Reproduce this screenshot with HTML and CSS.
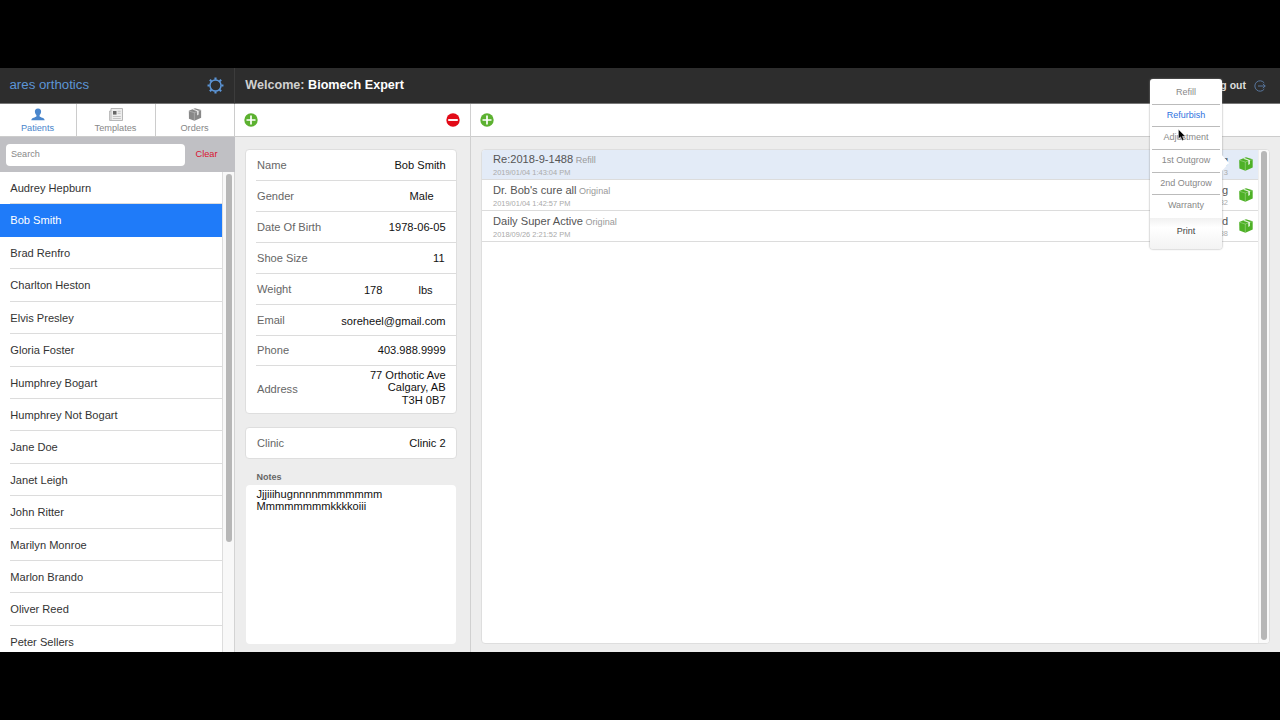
FILE: index.html
```html
<!DOCTYPE html>
<html lang="en">
<head>
<meta charset="utf-8">
<title>ares orthotics</title>
<link rel="stylesheet" href="styles.css">
</head>
<body>
<svg class="defs" width="0" height="0">
  <symbol id="box" viewBox="0 0 14 14">
    <path d="M.2 3 7 .3l6.700 1.900v8.300L6.400 13.700.4 11.500z" fill="currentColor"/>
    <path d="M.6 3.300 6.300 5M6.300 5v8.400M6.300 5 13.500 2.500" fill="none" stroke="#fff" stroke-width=".5" opacity=".6"/>
    <path d="M4.100 1.700 9.300 3.500v4.500l1.600-1V3L5.700 1.100z" fill="#fff" opacity=".85"/>
  </symbol>
  <symbol id="plus" viewBox="0 0 14 14">
    <circle cx="7" cy="7" r="6.7" fill="#5cb130"/>
    <path d="M7 2.500v9M2.500 7h9" stroke="#fff" stroke-width="1.700"/>
  </symbol>
</svg>
<div class="app">
  <aside class="sidebar">
    <header class="topbar brand"><span>ares orthotics</span>
      <svg class="gear" viewBox="-8 -8 16 16"><circle r="5.200" fill="none" stroke="#5c95d6" stroke-width="1.400"/><path d="M0-5.500v-2M0 5.500v2M-5.500 0h-2M5.500 0h2M3.900-3.900 5.300-5.300M-3.900-3.900-5.300-5.300M3.900 3.900 5.300 5.300M-3.900 3.900-5.300 5.300" stroke="#5c95d6" stroke-width="2"/></svg>
    </header>
    <nav class="tabs">
      <div class="tab active"><svg viewBox="0 0 14 12"><path d="M7 0C4.700 0 3.800 1.400 3.900 3.300c.1 1.500.8 2.600 1.500 3.200v1.500C4.500 9 .8 8.900.3 11.800h13.400C13.200 8.900 9.500 9 8.600 8V6.500c.7-.6 1.400-1.700 1.500-3.200C10.200 1.400 9.300 0 7 0z" fill="currentColor"/></svg>Patients</div>
      <div class="tab"><svg viewBox="0 0 14 13"><path d="M2 .5h11.500v12H.6V3H2z" fill="#ededed" stroke="#b0b0b0" stroke-width=".9"/><path d="M2 3v9" stroke="#b0b0b0" stroke-width=".8"/><path d="M4 3h3.500v3.600H4z" fill="#666"/><path d="M8.700 3.300h3M8.700 5.300h3M3.800 8.500h8M3.800 10.500h8" stroke="#b8b8b8" stroke-width=".8"/></svg>Templates</div>
      <div class="tab"><svg viewBox="0 0 14 14"><use href="#box"/></svg>Orders</div>
    </nav>
    <div class="search"><div class="field">Search</div><span class="clear">Clear</span></div>
    <div class="patients">
      <ul class="list">
        <li>Audrey Hepburn</li><li class="selected">Bob Smith</li><li>Brad Renfro</li><li>Charlton Heston</li><li>Elvis Presley</li><li>Gloria Foster</li><li>Humphrey Bogart</li><li>Humphrey Not Bogart</li><li>Jane Doe</li><li>Janet Leigh</li><li>John Ritter</li><li>Marilyn Monroe</li><li>Marlon Brando</li><li>Oliver Reed</li><li>Peter Sellers</li>
      </ul>
      <div class="track"><div class="thumb"></div></div>
    </div>
  </aside>
  <section class="main">
    <header class="topbar welcome"><span><i>Welcome:</i> Biomech Expert</span>
      <span class="logout">g out <svg viewBox="0 0 12 12"><path d="M10.300 3A5.200 5.200 0 1 0 10.300 9M4 6h7.300M8.800 3.800 11.200 6 8.800 8.200" fill="none" stroke="#58779f" stroke-width="1"/></svg></span>
    </header>
    <div class="columns">
      <div class="detail">
        <div class="toolbar"><svg viewBox="0 0 14 14"><use href="#plus"/></svg><svg viewBox="0 0 14 14"><circle cx="7" cy="7" r="6.700" fill="#e20a17"/><path d="M2.200 7h9.600" stroke="#fff" stroke-width="1.900"/></svg></div>
        <div class="card info">
          <div class="row"><label>Name</label><span>Bob Smith</span></div>
          <div class="row"><label>Gender</label><span class="pick">Male</span></div>
          <div class="row"><label>Date Of Birth</label><span>1978-06-05</span></div>
          <div class="row low"><label>Shoe Size</label><span>11</span></div>
          <div class="row lower"><label>Weight</label><span class="amount">178</span><span class="unit">lbs</span></div>
          <div class="row lower"><label>Email</label><span>soreheel@gmail.com</span></div>
          <div class="row phone"><label>Phone</label><span>403.988.9999</span></div>
          <div class="row address"><label>Address</label><span>77 Orthotic Ave<br>Calgary, AB<br>T3H 0B7</span></div>
        </div>
        <div class="card clinic"><div class="row"><label>Clinic</label><span>Clinic 2</span></div></div>
        <h2>Notes</h2>
        <div class="notes">Jjjiiihugnnnnmmmmmmm<br>Mmmmmmmmkkkkoiii</div>
      </div>
      <div class="orders">
        <div class="toolbar"><svg viewBox="0 0 14 14"><use href="#plus"/></svg></div>
        <div class="card orderbox">
          <div class="orderlist">
            <div class="order current"><div class="what"><b>Re:2018-9-1488</b> Refill<small>2019/01/04 1:43:04 PM</small></div><div class="state">g<small>3</small></div><svg viewBox="0 0 14 14"><use href="#box"/></svg></div>
            <div class="order"><div class="what"><b>Dr. Bob's cure all</b> Original<small>2019/01/04 1:42:57 PM</small></div><div class="state">g<small>32</small></div><svg viewBox="0 0 14 14"><use href="#box"/></svg></div>
            <div class="order"><div class="what"><b>Daily Super Active</b> Original<small>2018/09/26 2:21:52 PM</small></div><div class="state">d<small>38</small></div><svg viewBox="0 0 14 14"><use href="#box"/></svg></div>
          </div>
          <div class="track"><div class="thumb"></div></div>
        </div>
      </div>
    </div>
  </section>
  <div class="menu">
    <div>Refill</div><div class="hot">Refurbish</div><div>Adjustment</div><div>1st Outgrow</div><div>2nd Outgrow</div><div class="last">Warranty</div><div class="print">Print</div>
    <svg class="arrow" viewBox="0 0 8 18"><path d="M0 0 8 9 0 18z" fill="#fff"/></svg>
  </div>
  <svg class="cursor" viewBox="0 0 8 12"><path d="M.5.5v9.300l2.100-2 1.500 3.600 1.700-.7-1.500-3.500h2.900z" fill="#000" stroke="#ddd" stroke-width=".4"/></svg>
</div>
</body>
</html>
```

FILE: styles.css
```css
* { box-sizing: border-box; }
body { margin: 0; height: 720px; padding: 68px 0; background: #000; font: 11.1px/13px "Liberation Sans", Arial, sans-serif; color: #333; overflow: hidden; }
svg { display: block; flex: none; }
.defs { position: absolute; }
.app { position: relative; display: flex; height: 584px; background: #ededed; }
.sidebar { width: 235px; height: 584px; display: flex; flex-direction: column; overflow: hidden; background: #fff; }
.topbar { height: 36px; flex: none; background: #2d2d2d; border-bottom: 1px solid #777; display: flex; align-items: center; justify-content: space-between; }
.brand { color: #5c95d6; font-size: 13.25px; padding: 0 10px 2px 9.5px; border-right: 1px solid #3c3c3c; }
.gear { width: 17px; height: 17px; margin-top: 2px; }
.tabs { display: flex; height: 33px; flex: none; border-bottom: 1px solid #ccc; border-right: 1px solid #ccc; }
.tab { flex: 1; display: flex; flex-direction: column; align-items: center; padding: 4px 1px 0 0; font-size: 9.2px; line-height: 14px; color: #888; border-left: 1px solid #ccc; }
.tab:first-child { border-left: 0; flex: 0 0 76px; }
.tab svg { width: 14px; height: 13px; }
.tab.active { color: #4a86cc; }
.search { height: 35px; flex: none; background: #c0c0c4; display: flex; align-items: center; padding-left: 6px; }
.field { width: 179px; height: 22px; border-radius: 4px; background: #fff; color: #888; font-size: 9.1px; line-height: 21px; padding-left: 5px; }
.clear { margin: -1px 0 0 10.5px; color: #d9122f; font-size: 9.2px; }
.patients { display: flex; flex: 1; min-height: 0; border-right: 1px solid #d3d3d3; }
.list { width: 223px; margin: 0; padding: 0; list-style: none; border-right: 1px solid #ddd; overflow: hidden; }
.list li { height: 32.43px; line-height: 32px; padding-left: 10.3px; background: linear-gradient(#dcdcdc, #dcdcdc) 10px 100% / 100% 1px no-repeat; }
.list .selected { background: #1f7bf9; color: #fff; }
.track { flex: 1; background: #f8f8f8; padding: 2px 2px 0 3px; }
.thumb { width: 6px; height: 368px; border-radius: 3px; background: #b7b7b7; }
.main { flex: 1; display: flex; flex-direction: column; }
.welcome { padding: 0 14px 0 10.3px; font-size: 12.6px; font-weight: bold; color: #fff; }
.welcome i { font-style: normal; color: #d0d0d0; }
.logout { display: flex; align-items: center; gap: 8px; font-size: 10.5px; color: #ddd; }
.logout svg { width: 12px; height: 12px; }
.columns { display: flex; flex: 1; }
.detail { width: 236px; border-right: 1px solid #d0d0d0; }
.toolbar { height: 33px; background: #fff; border-bottom: 1px solid #ccc; display: flex; align-items: center; justify-content: space-between; padding: 0 10px 0 9px; }
.toolbar svg { width: 14px; height: 14px; }
.card { background: #fff; border: 1px solid #dedede; border-radius: 4px; }
.info { margin: 12px 13px 0 10px; height: 265px; padding-left: 10px; }
.row { height: 31px; border-bottom: 1px solid #dcdcdc; display: flex; justify-content: space-between; align-items: center; padding: 0 10.4px 0 1px; line-height: 12.4px; color: #111; }
.row label { color: #666; }
.row .pick { margin-right: 12px; }
.row.low span { padding-top: 1px; margin-right: 1px; }
.lower span { padding-top: 2px; }
.amount { margin-left: auto; margin-right: 36px; }
.unit { margin-right: 13px; }
.phone { height: 30px; }
.address { height: 46px; border: 0; text-align: right; }
.address span { padding-bottom: 3px; }
.clinic { margin: 13px 13px 0 10px; height: 32px; padding-left: 10px; }
.clinic .row { height: 30px; border: 0; }
.detail h2 { margin: 12px 0 0 21.5px; font-size: 9px; line-height: 12px; color: #666; }
.notes { margin: 2px 14px 0 11px; height: 159px; padding: 3px 10.5px; background: #fff; border-radius: 4px; line-height: 12.4px; color: #111; }
.orders { flex: 1; display: flex; flex-direction: column; }
.orderbox { margin: 12px 10px 8px 10px; flex: 1; display: flex; overflow: hidden; }
.orderlist { width: 777px; border-right: 1px solid #eee; }
.orderbox .track { padding: 1px 2px; background: #fafafa; }
.orderbox .thumb { height: 489px; }
.order { height: 31px; border-bottom: 1px solid #dcdcdc; display: flex; align-items: center; padding: 0 5px 0 11px; color: #999; font-size: 9.05px; }
.order:first-child { height: 30px; }
.order b { font-weight: normal; font-size: 11.1px; color: #555; }
.order small { display: block; font-size: 7.45px; line-height: 11px; color: #aaa; }
.what, .state { padding-top: 2px; }
.current { background: #e3ebf7; }
.state { margin-left: auto; text-align: right; color: #555; font-size: 11px; }
.order svg { width: 14px; height: 14px; color: #4eb126; margin: 0 0 1px 11px; }
.menu { position: absolute; left: 1150px; top: 11px; width: 72px; height: 170px; background: #fff; border-radius: 3px; box-shadow: 0 0 2px #888; text-align: center; font-size: 9px; color: #888; padding-top: 3px; }
.menu div { height: 22.65px; line-height: 21.5px; margin: 0 2px; border-bottom: 1px solid #bbb; }
.menu .hot { color: #2f73e0; }
.menu .last { border: 0; }
.menu .print { height: 31px; line-height: 27px; margin: 0; border: 0; background: linear-gradient(#f1f1f1, #fff 30%, #f3f3f3); color: #444; border-radius: 0 0 3px 3px; }
.arrow { position: absolute; left: 71px; top: 75px; width: 8px; height: 18px; }
.cursor { position: absolute; left: 1178px; top: 61px; width: 8px; height: 12px; }
```
